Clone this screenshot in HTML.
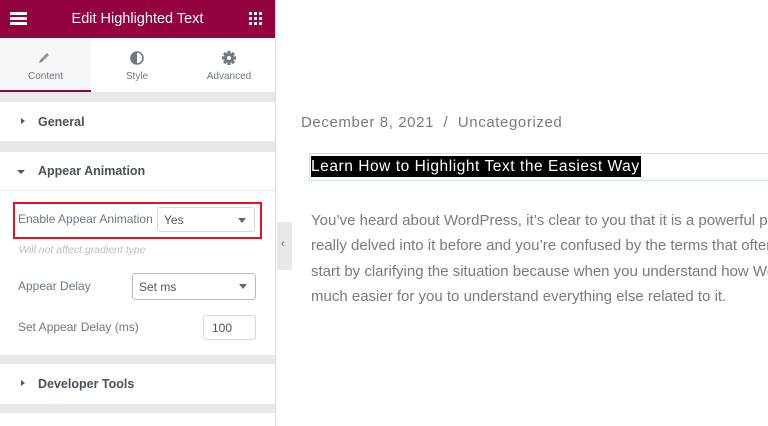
<!DOCTYPE html>
<html><head><style>
*{margin:0;padding:0;box-sizing:border-box}
body{width:768px;height:426px;overflow:hidden;background:#fff;font-family:"Liberation Sans",sans-serif;position:relative}
.abs{position:absolute}
#panel{left:0;top:0;width:276px;height:426px;background:#e6e8ea;border-right:1px solid #ddd}
#hdr{left:0;top:0;width:275px;height:38px;background:#93023e;color:#fff}
.sec{background:#fff;left:0;width:275px}
.lbl{color:#6d7882;font-size:12px}
.sel{background:#fff;border:1px solid #d5d8dc;border-radius:3px;font-size:12px;color:#555;padding-left:6px;line-height:24px}
.arr:after{content:"";position:absolute;right:8px;top:10px;border:4px solid transparent;border-top:5px solid #666}
.sh{font-weight:bold;font-size:12.5px;color:#495157}
.p{font-size:15px;color:#7a7a7a;left:311px;white-space:nowrap}
</style></head><body>
<div id="panel" class="abs"></div>
<div id="hdr" class="abs">
 <div class="abs" style="left:10px;top:12px;width:17px;height:3px;background:#fff;box-shadow:0 5px 0 #fff,0 10px 0 #fff"></div>
 <div class="abs" style="left:0;width:275px;top:11px;text-align:center;font-size:14.5px">Edit Highlighted Text</div>
 <svg class="abs" style="left:249px;top:12px" width="13" height="13"><g fill="#fff"><rect x="0" y="0" width="3" height="3"/><rect x="5" y="0" width="3" height="3"/><rect x="10" y="0" width="3" height="3"/><rect x="0" y="5" width="3" height="3"/><rect x="5" y="5" width="3" height="3"/><rect x="10" y="5" width="3" height="3"/><rect x="0" y="10" width="3" height="3"/><rect x="5" y="10" width="3" height="3"/><rect x="10" y="10" width="3" height="3"/></g></svg>
</div>
<div class="abs sec" style="top:38px;height:54px"></div>
<div class="abs" style="left:0;top:38px;width:91px;height:54px;background:#f5f6f7;border-bottom:2px solid #93023e"></div>
<svg class="abs" style="left:37px;top:51px" width="14" height="14"><path d="M2 12 L3 9 L10 2 L12 4 L5 11 Z" fill="#8a939b"/></svg>
<div class="abs" style="left:0;width:91px;top:71px;text-align:center;font-size:10px;color:#6d7882">Content</div>
<svg class="abs" style="left:130px;top:51px" width="14" height="14"><circle cx="7" cy="7" r="6" fill="none" stroke="#6d7882" stroke-width="1.6"/><path d="M7 1 A6 6 0 0 0 7 13 Z" fill="#6d7882"/></svg>
<div class="abs" style="left:91px;width:92px;top:71px;text-align:center;font-size:10px;color:#6d7882">Style</div>
<svg class="abs" style="left:222px;top:51px" width="14" height="14"><g fill="#6d7882" transform="translate(7 7)"><rect x="-1.6" y="-7" width="3.2" height="14"/><rect x="-1.6" y="-7" width="3.2" height="14" transform="rotate(45)"/><rect x="-1.6" y="-7" width="3.2" height="14" transform="rotate(90)"/><rect x="-1.6" y="-7" width="3.2" height="14" transform="rotate(135)"/><circle r="5"/></g><circle cx="7" cy="7" r="2" fill="#fff"/></svg>
<div class="abs" style="left:183px;width:92px;top:71px;text-align:center;font-size:10px;color:#6d7882">Advanced</div>

<div class="abs sec" style="top:102px;height:39px"></div>
<div class="abs" style="left:21px;top:118px;border:3px solid transparent;border-left:4px solid #555"></div>
<div class="abs sh" style="left:38px;top:115px">General</div>

<div class="abs sec" style="top:152px;height:203px"></div>
<div class="abs" style="left:0;top:190px;width:275px;height:1px;background:#e6e8ea"></div>
<div class="abs" style="left:17px;top:170px;border:4px solid transparent;border-top:4px solid #555"></div>
<div class="abs sh" style="left:38px;top:164px">Appear Animation</div>

<div class="abs" style="left:13px;top:202px;width:249px;height:37px;border:2px solid #e0141e"></div>
<div class="abs lbl" style="left:18px;top:212px">Enable Appear Animation</div>
<div class="abs sel arr" style="left:157px;top:207px;width:98px;height:25px">Yes</div>
<div class="abs" style="left:19px;top:244px;font-size:10.5px;font-style:italic;color:#b8bdc2">Will not affect gradient type</div>
<div class="abs lbl" style="left:18px;top:279px">Appear Delay</div>
<div class="abs sel arr" style="left:132px;top:273px;width:124px;height:27px;border-color:#bbb;line-height:26px">Set ms</div>
<div class="abs lbl" style="left:18px;top:320px">Set Appear Delay (ms)</div>
<div class="abs sel" style="left:203px;top:315px;width:53px;height:25px;padding-left:8px">100</div>

<div class="abs sec" style="top:364px;height:40px"></div>
<div class="abs" style="left:21px;top:380px;border:3px solid transparent;border-left:4px solid #555"></div>
<div class="abs sh" style="left:38px;top:377px">Developer Tools</div>
<div class="abs sec" style="top:413px;height:13px"></div>

<div class="abs" style="left:277px;top:222px;width:15px;height:48px;background:#e6e8ea"></div>
<div class="abs" style="left:281px;top:238px;font-size:11px;color:#666">‹</div>

<div class="abs" style="left:301px;top:114px;font-size:15px;color:#7a7a7a;letter-spacing:0.6px">December 8, 2021&nbsp; / &nbsp;Uncategorized</div>
<div class="abs" style="left:309px;top:153px;width:470px;height:28px;border:1px solid #bfe6ea"></div>
<div class="abs" style="left:311px;top:156px;height:21px;background:#000;color:#fff;font-size:15.5px;line-height:21px;padding-right:1px;letter-spacing:0.55px">Learn How to Highlight Text the Easiest Way</div>
<div class="abs p" style="top:212px">You’ve heard about WordPress, it’s clear to you that it is a powerful pla</div>
<div class="abs p" style="top:237px">really delved into it before and you’re confused by the terms that often</div>
<div class="abs p" style="top:263px">start by clarifying the situation because when you understand how Wo</div>
<div class="abs p" style="top:288px">much easier for you to understand everything else related to it.</div>
</body></html>
